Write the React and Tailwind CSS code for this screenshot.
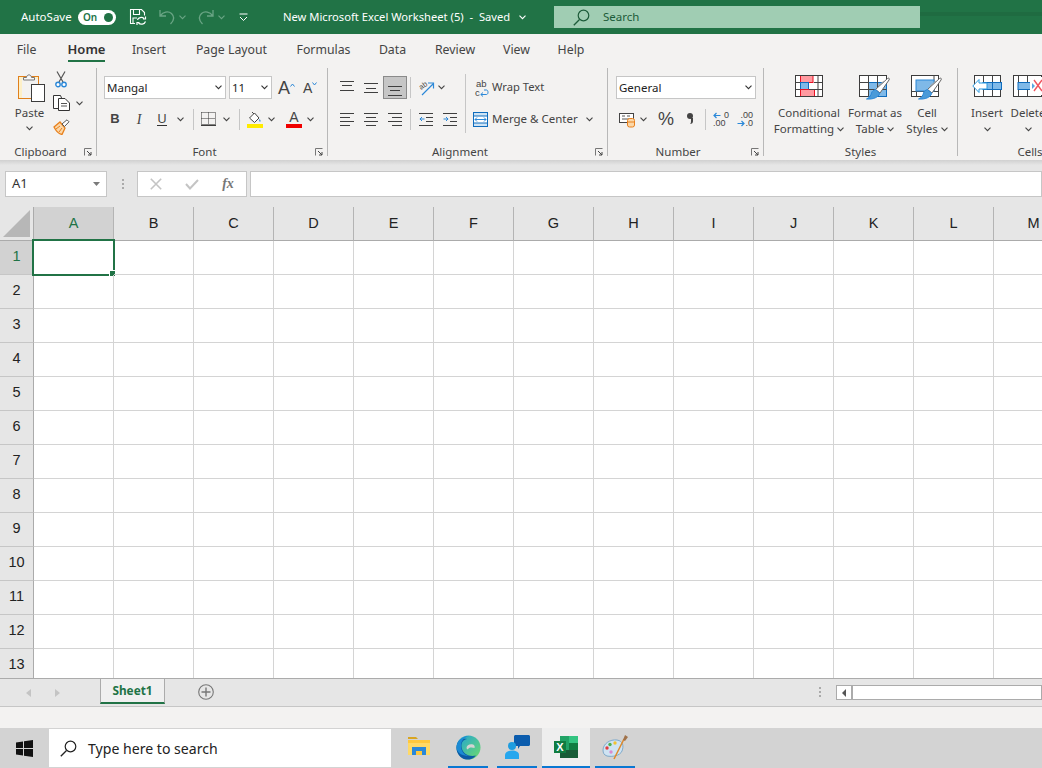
import React from "react";

const Chev = ({ c = "#444", className = "" }) => (
  <svg width="7" height="5" viewBox="0 0 7 5" className={"shrink-0 " + className}>
    <path d="M0.5 0.7L3.5 3.7L6.5 0.7" stroke={c} strokeWidth="1.1" fill="none" />
  </svg>
);

const Lines = ({ lines, w = 14, h = 18, children }) => (
  <svg width={w} height={h} viewBox={`0 0 ${w} ${h}`} className="shrink-0">
    {lines.map(([a, b, y], i) => (
      <rect key={i} x={a} y={y} width={b - a} height="1" fill="#3f3f3f" />
    ))}
    {children}
  </svg>
);

const Launcher = () => (
  <svg width="8" height="8" viewBox="0 0 8 8" className="shrink-0">
    <path d="M0.5 7.5V0.5H7.5" stroke="#777" fill="none" />
    <path d="M3 3L7 7M7 4V7H4" stroke="#444" fill="none" />
  </svg>
);

const PasteIcon = () => (
  <svg width="27" height="30" viewBox="0 0 27 30" className="block">
    <rect x="0.5" y="4.5" width="20" height="22" fill="#fdf0c8" stroke="#e0801c" />
    <rect x="4" y="7" width="16" height="19" fill="#f3f2f1" />
    <path d="M5.5 8V5.5H8.5C8.8 2 13.2 2 13.5 5.5H16.5V8Z" fill="#f7f7f7" stroke="#777" />
    <rect x="13.5" y="12.5" width="13" height="17" fill="#fff" stroke="#3c3c3c" />
  </svg>
);

const Scissors = () => (
  <svg width="12" height="17" viewBox="0 0 12 17" className="block">
    <path d="M2 0.5L8 11M10 0.5L4 11" stroke="#555" strokeWidth="1.2" fill="none" />
    <circle cx="3" cy="13.5" r="2.2" fill="#fff" stroke="#2b88d8" strokeWidth="1.4" />
    <circle cx="9" cy="13.5" r="2.2" fill="#fff" stroke="#2b88d8" strokeWidth="1.4" />
  </svg>
);

const CopyIcon = () => (
  <svg width="17" height="16" viewBox="0 0 17 16" className="block">
    <path d="M5.5 13.5H0.5V0.5H7.5L8.5 3" fill="#fff" stroke="#333" />
    <path d="M5.5 3.5H12L16.5 8V15.5H5.5Z" fill="#fff" stroke="#333" />
    <path d="M8 8.5H14M8 11H14" stroke="#555" />
  </svg>
);

const BrushIcon = () => (
  <svg width="17" height="16" viewBox="0 0 17 16" className="block">
    <path d="M1 8L7 3L12 9L9 15.5C6 15 3 12 1 8Z" fill="#fbd7a8" stroke="#e8801c" strokeWidth="1.3" />
    <path d="M3 10L7 7M6 13L9 9" stroke="#e8801c" />
    <path d="M9 5L14 0.8L16 2.8L11.5 7.5Z" fill="#fff" stroke="#555" />
  </svg>
);

const CondIcon = () => (
  <svg width="29" height="23" viewBox="0 0 29 23" className="block">
    <rect x="0.5" y="0.5" width="27" height="21" fill="#fff" />
    <rect x="5.5" y="0.5" width="12.5" height="7" fill="#ff9aa0" stroke="#e81123" />
    <rect x="5.5" y="7.5" width="8" height="7" fill="#7fb9e8" stroke="#0f6cbd" />
    <rect x="5.5" y="14.5" width="14" height="7" fill="#ff9aa0" stroke="#e81123" />
    <path d="M0.5 7.5H5M0.5 14.5H5M19 7.5H27.5M14 14.5H27.5M23 0.5V21.5" stroke="#444" fill="none" />
    <rect x="0.5" y="0.5" width="27" height="21" fill="none" stroke="#3c3c3c" />
  </svg>
);

const Brush = () => (
  <g>
    <path d="M28.5 3.5C29.8 2.5 31 3.7 30 5L21 18L16.5 14.5Z" fill="#fff" stroke="#666" />
    <path d="M19 11L25 6" stroke="#aaa" />
    <path d="M16.5 14.5L20.8 18.3C19.5 22.5 14 24.5 7.5 24C11 22.5 12 20 12.5 18C13 16 14.8 15 16.5 14.5Z" fill="#4a9ad8" stroke="#2b88d8" />
  </g>
);

const TableIcon = () => (
  <svg width="32" height="25" viewBox="0 0 32 25" className="block">
    <rect x="0.5" y="0.5" width="27" height="21" fill="#fff" stroke="#3c3c3c" />
    <rect x="9.5" y="7.5" width="18" height="14" fill="#7fb9e8" stroke="#0f6cbd" />
    <path d="M0.5 7.5H9.5M0.5 14.5H27.5M9.5 0.5V21.5M18.5 0.5V21.5" stroke="#444" fill="none" />
    <Brush />
  </svg>
);

const CellIcon = () => (
  <svg width="32" height="25" viewBox="0 0 32 25" className="block">
    <rect x="0.5" y="0.5" width="27" height="21" fill="#fff" stroke="#3c3c3c" />
    <path d="M0.5 16.5H27.5M5.5 16.5V21.5M18.5 16.5V21.5M23 0.5V16" stroke="#444" fill="none" />
    <rect x="5" y="5" width="18" height="11" fill="#7fb9e8" stroke="#2b88d8" />
    <Brush />
  </svg>
);

const InsertIcon = () => (
  <svg width="30" height="23" viewBox="0 0 30 23" className="block">
    <rect x="2.5" y="0.5" width="26" height="21" fill="#fff" stroke="#3c3c3c" />
    <path d="M11.5 0.5V21.5M20.5 0.5V21.5" stroke="#444" />
    <rect x="11" y="7.5" width="18.5" height="7" fill="#7fb9e8" stroke="#0f6cbd" />
    <path d="M20.5 7.5V14.5" stroke="#0f6cbd" />
    <path d="M0.8 11L7 4.5V8H15V14H7V17.5Z" fill="#fff" stroke="#2b9ae0" />
  </svg>
);

const DeleteIcon = () => (
  <svg width="30" height="23" viewBox="0 0 30 23" className="block">
    <rect x="0.5" y="0.5" width="28" height="21" fill="#fff" stroke="#3c3c3c" />
    <path d="M5.5 0.5V21.5M14.5 0.5V21.5" stroke="#444" />
    <rect x="5" y="7.5" width="14" height="7" fill="#7fb9e8" stroke="#0f6cbd" />
    <rect x="17" y="2" width="13" height="18" fill="#fff" />
    <path d="M19 8L22 11L19 14Z" fill="#5aa6e0" />
    <path d="M21 5L29 16M29 5L21 16" stroke="#f0555f" strokeWidth="1.4" />
  </svg>
);

const SaveIcon = () => (
  <svg width="18" height="18" viewBox="0 0 18 18" className="block">
    <path d="M6 15.5H1.5V1.5H12.5L15.5 4.5V7.5" stroke="#fff" fill="none" strokeWidth="1.1" />
    <path d="M4.5 1.5V6.5H10.5V1.5M4 15V10H8" stroke="#fff" fill="none" strokeWidth="1.1" />
    <path d="M8.5 12C9 9.5 13 8.5 15 10.5M16.5 8.5V11H14M16.5 13.5C15.5 16.5 11.5 17 9.5 15M8 17V14.5H10.5" stroke="#fff" fill="none" strokeWidth="1.2" />
  </svg>
);

const Undo = ({ flip }) => (
  <svg width="16" height="16" viewBox="0 0 16 16" className={"block " + (flip ? "-scale-x-100" : "")}>
    <path d="M1 1V7H7M1.5 6.5C4 3 9 1.5 12.5 4.5C15.5 7.5 15 11.5 11.5 15" stroke="#6aa585" fill="none" strokeWidth="1.3" />
  </svg>
);

const Magnifier = ({ c, size = 17 }) => (
  <svg width={size} height={size} viewBox="0 0 17 17" className="block">
    <circle cx="10.5" cy="6.5" r="5.3" stroke={c} strokeWidth="1.2" fill="none" />
    <path d="M6.5 10.5L0.8 16.2" stroke={c} strokeWidth="1.3" />
  </svg>
);

const tabs = [
  ["File", "w-[53px]"],
  ["Home", "w-[67px]"],
  ["Insert", "w-[58px]"],
  ["Page Layout", "w-[107px]"],
  ["Formulas", "w-[77px]"],
  ["Data", "w-[61px]"],
  ["Review", "w-[64px]"],
  ["View", "w-[59px]"],
  ["Help", "w-[50px]"],
];

const Label = ({ text, launcher }) => (
  <div className="mt-auto -mb-[3px] flex h-[14px] items-center text-[#444]">
    <span className="flex-1 text-center leading-[14px]">{text}</span>
    {launcher && (
      <span className="flex w-[15px] justify-start pl-[3px]">
        <Launcher />
      </span>
    )}
  </div>
);

const Sep = ({ className = "" }) => <div className={"h-[21px] w-px shrink-0 bg-[#c6c6c6] " + className} />;

const Box = ({ children, className = "" }) => (
  <div className={"flex h-[23px] shrink-0 items-center justify-center " + className}>{children}</div>
);

const Select = ({ text, className = "" }) => (
  <div className={"flex h-[23px] shrink-0 items-center justify-between border border-[#c6c6c6] bg-white pl-[2px] pr-[3px] text-[#222] " + className}>
    <span>{text}</span>
    <Chev c="#333" />
  </div>
);

const BigBtn = ({ icon, l1, l2, chev2, width }) => (
  <div className={"flex flex-col items-center pt-[7px] whitespace-nowrap text-[#444] " + width}>
    <div className="flex h-[23px] w-full justify-center">{icon}</div>
    <div className="mt-[7px] leading-[16px]">{l1}</div>
    <div className="flex h-[16px] items-center gap-[3px] leading-[16px]">
      {l2 && <span>{l2}</span>}
      {chev2 && <Chev />}
    </div>
  </div>
);

const cols = ["A", "B", "C", "D", "E", "F", "G", "H", "I", "J", "K", "L", "M"];
const rows = [1, 2, 3, 4, 5, 6, 7, 8, 9, 10, 11, 12, 13];

function Grid() {
  return (
    <div className="min-h-0 flex-1 overflow-hidden bg-white">
      <div className="grid w-max grid-cols-[34px_repeat(13,80px)] auto-rows-[34px] font-['Liberation_Sans',sans-serif] text-[14.5px] text-[#222]">
        <div className="flex items-end justify-end border-r border-b border-[#ababab] bg-[#e6e6e6] pr-[3px] pb-[3px]">
          <svg width="27" height="27" viewBox="0 0 27 27" className="block">
            <path d="M27 0V27H0Z" fill="#b7b7b7" />
          </svg>
        </div>
        {cols.map((c, i) => (
          <div
            key={c}
            className={
              "flex items-center justify-center border-r border-b border-r-[#b4b4b4] border-b-[#ababab] " +
              (i === 0 ? "bg-[#d2d2d2] text-[#217346]" : "bg-[#e6e6e6]")
            }
          >
            {c}
          </div>
        ))}
        {rows.map((r) => (
          <React.Fragment key={r}>
            <div
              className={
                "flex items-center justify-center border-r border-b border-r-[#ababab] border-b-[#c6c6c6] pb-[2px] " +
                (r === 1 ? "bg-[#d2d2d2] text-[#217346]" : "bg-[#e6e6e6]")
              }
            >
              {r}
            </div>
            {cols.map((c, i) => (
              <div key={c} className="relative border-r border-b border-[#d4d4d4]">
                {r === 1 && i === 0 && (
                  <>
                    <div className="absolute -top-[2px] -left-[2px] h-[37px] w-[83px] border-2 border-[#217346]" />
                    <div className="absolute -right-[3px] -bottom-[3px] h-[7px] w-[7px] border border-white bg-[#217346]" />
                  </>
                )}
              </div>
            ))}
          </React.Fragment>
        ))}
      </div>
    </div>
  );
}

function TitleBar() {
  return (
    <div className="flex h-[34px] shrink-0 items-center whitespace-nowrap bg-[#217346] pl-[21px] text-white">
      <span className="w-[50px]">AutoSave</span>
      <div className="ml-[7px] flex h-[15px] w-[38px] items-center justify-between rounded-full bg-white pl-[5px] pr-[3px] text-[#217346]">
        <span className="text-[10px] font-semibold leading-none">On</span>
        <span className="h-[9px] w-[9px] rounded-full bg-[#217346]" />
      </div>
      <div className="ml-[13px] w-[18px]">
        <SaveIcon />
      </div>
      <div className="ml-[12px]">
        <Undo />
      </div>
      <Chev c="#6aa585" className="ml-[4px]" />
      <div className="ml-[12px]">
        <Undo flip />
      </div>
      <Chev c="#6aa585" className="ml-[4px]" />
      <svg width="9" height="9" viewBox="0 0 9 9" className="ml-[14px] shrink-0">
        <path d="M0.5 1H8.5" stroke="#fff" />
        <path d="M1 4L4.5 7.5L8 4" stroke="#fff" fill="none" />
      </svg>
      <span className="ml-[35px] w-[231px] text-[11.2px]">New Microsoft Excel Worksheet (5)&nbsp; -&nbsp; Saved</span>
      <Chev c="#fff" className="ml-[5px]" />
      <div className="ml-[28px] flex h-[22px] w-[366px] shrink-0 items-center bg-[#a0cdb3] pl-[19px] text-[#1d5c3a]">
        <Magnifier c="#1d5c3a" />
        <span className="ml-[13px]">Search</span>
      </div>
      <div className="flex h-full flex-1 items-start overflow-hidden pt-[12px]">
        <div className="h-[4px] w-full bg-[#1f6b41]" />
      </div>
    </div>
  );
}

function Tabs() {
  return (
    <div className="flex h-[30px] shrink-0 bg-[#f3f2f1] text-[12.3px] text-[#444]">
      {tabs.map(([t, w]) => (
        <div key={t} className={"flex justify-center pt-[6px] " + w}>
          {t === "Home" ? (
            <span className="h-[22px] border-b-[2px] border-[#217346] text-[13px] font-semibold leading-[18px] text-[#333]">{t}</span>
          ) : (
            <span className="mt-[1px] leading-[18px]">{t}</span>
          )}
        </div>
      ))}
    </div>
  );
}

function Clipboard() {
  return (
    <div className="flex h-[88px] w-[97px] shrink-0 flex-col border-r border-[#b8b8b8]">
      <div className="flex">
        <div className="ml-[10px] flex w-[39px] flex-col pt-[4px] text-[#444]">
          <div className="h-[30px] pl-[8px]">
            <PasteIcon />
          </div>
          <div className="mt-[3px] text-center leading-[16px]">Paste</div>
          <div className="mt-[5px] flex justify-center">
            <Chev />
          </div>
        </div>
        <div className="ml-[4px] flex flex-col pt-[3px]">
          <div className="h-[17px] pl-[2px]">
            <Scissors />
          </div>
          <div className="mt-[7px] flex h-[16px] items-center">
            <CopyIcon />
            <Chev className="ml-[6px]" />
          </div>
          <div className="mt-[8px]">
            <BrushIcon />
          </div>
        </div>
      </div>
      <Label text="Clipboard" launcher />
    </div>
  );
}

const GrowA = ({ up }) => (
  <div className="flex w-[15px] shrink-0 items-end justify-start">
    <span className={"font-['Liberation_Sans',sans-serif] text-[#444] " + (up ? "text-[18px] leading-[20px]" : "text-[14px] leading-[18px]")}>A</span>
    <svg width="5" height="4" viewBox="0 0 5 4" className="mb-[11px] shrink-0">
      <path d={up ? "M0.5 3.5L2.5 1L4.5 3.5" : "M0.5 0.5L2.5 3L4.5 0.5"} stroke="#2b88d8" fill="none" />
    </svg>
  </div>
);

function FontGroup() {
  return (
    <div className="flex h-[88px] w-[231px] shrink-0 flex-col border-r border-[#b8b8b8] pt-[8px]">
      <div className="flex items-center pl-[7px]">
        <Select text="Mangal" className="w-[122px]" />
        <Select text="11" className="ml-[3px] w-[43px]" />
        <div className="ml-[6px]">
          <GrowA up />
        </div>
        <div className="ml-[10px]">
          <GrowA />
        </div>
      </div>
      <div className="mt-[8px] flex h-[24px] items-center pl-[7px] text-[#444]">
        <Box className="w-[22px] font-['Liberation_Sans',sans-serif] text-[13px] font-bold">B</Box>
        <Box className="ml-[2px] w-[22px] font-['Liberation_Serif',serif] text-[14px] italic">I</Box>
        <Box className="ml-[1px] w-[22px] text-[13px]">
          <span className="border-b border-[#333] leading-[13px]">U</span>
        </Box>
        <Chev className="ml-[4px]" />
        <Sep className="ml-[9px]" />
        <svg width="15" height="14" viewBox="0 0 15 14" className="ml-[7px] shrink-0">
          <path d="M0.5 0.5H14.5M0.5 0.5V12.5M14.5 0.5V12.5M7.5 0.5V12.5M0.5 6.5H14.5" stroke="#333" strokeDasharray="1 1" fill="none" />
          <rect x="0" y="12.5" width="15" height="1.3" fill="#111" />
        </svg>
        <Chev className="ml-[7px]" />
        <Sep className="ml-[9px]" />
        <svg width="16" height="17" viewBox="0 0 16 17" className="ml-[7px] shrink-0">
          <path d="M2.5 7L7.5 2L12 7L7.5 11.5Z" fill="#fff" stroke="#444" />
          <path d="M5 1L7 3" stroke="#444" />
          <path d="M12.5 8C13.5 9 14 10 13 11C12 10 12 9 12.5 8Z" fill="#2b88d8" />
          <rect x="0" y="13" width="16" height="4" fill="#ffeb00" />
        </svg>
        <Chev className="ml-[5px]" />
        <div className="ml-[11px] flex w-[16px] shrink-0 flex-col items-center">
          <span className="font-['Liberation_Sans',sans-serif] text-[14px] leading-[14px]">A</span>
          <div className="h-[4px] w-[16px] bg-[#f00000]" />
        </div>
        <Chev className="ml-[5px]" />
      </div>
      <Label text="Font" launcher />
    </div>
  );
}

function Alignment() {
  return (
    <div className="flex h-[88px] w-[280px] shrink-0 flex-col border-r border-[#b8b8b8] pt-[8px]">
      <div className="flex pl-[7px]">
        <div className="flex w-[130px] shrink-0 flex-col">
          <div className="flex h-[23px] items-center">
            <Box className="w-[24px]">
              <Lines lines={[[0, 14, 2], [2, 12, 6], [0, 14, 11]]} />
            </Box>
            <Box className="w-[24px]">
              <Lines lines={[[0, 14, 4], [2, 12, 9], [0, 14, 13]]} />
            </Box>
            <Box className="w-[24px] border border-[#8a8a8a] bg-[#c6c6c6]">
              <Lines lines={[[0, 14, 7], [2, 12, 11], [0, 14, 16]]} />
            </Box>
            <Sep className="ml-[3px]" />
            <div className="ml-[7px] flex items-center">
              <svg width="17" height="18" viewBox="0 0 17 18" className="shrink-0">
                <text x="3" y="11" fontSize="7.5" fill="#444" fontFamily="Liberation Sans" transform="rotate(-35 3 11)">ab</text>
                <path d="M4 16L15 5M10 4H15.5V9.5" stroke="#2b88d8" strokeWidth="1.2" fill="none" />
              </svg>
              <Chev className="ml-[3px]" />
            </div>
          </div>
          <div className="mt-[8px] flex h-[24px] items-center">
            <Box className="w-[24px]">
              <Lines lines={[[0, 14, 3], [0, 10, 7], [0, 14, 11], [0, 10, 15]]} />
            </Box>
            <Box className="w-[24px]">
              <Lines lines={[[0, 14, 3], [2, 12, 7], [0, 14, 11], [2, 12, 15]]} />
            </Box>
            <Box className="w-[24px]">
              <Lines lines={[[0, 14, 3], [4, 14, 7], [0, 14, 11], [4, 14, 15]]} />
            </Box>
            <Sep className="ml-[3px]" />
            <Box className="ml-[3px] w-[24px]">
              <Lines lines={[[0, 14, 3], [7, 14, 7], [7, 14, 11], [0, 14, 15]]}>
                <path d="M5.5 9H0.8M3 7L1 9L3 11" stroke="#2b88d8" fill="none" />
              </Lines>
            </Box>
            <Box className="w-[24px]">
              <Lines lines={[[0, 14, 3], [7, 14, 7], [7, 14, 11], [0, 14, 15]]}>
                <path d="M0.5 9H5.2M3 7L5 9L3 11" stroke="#2b88d8" fill="none" />
              </Lines>
            </Box>
          </div>
        </div>
        <div className="-mt-[2px] h-[59px] w-px shrink-0 bg-[#c6c6c6]" />
        <div className="flex flex-col whitespace-nowrap text-[#444]">
          <div className="flex h-[23px] items-center pl-[9px]">
            <div className="flex h-[18px] w-[16px] shrink-0 flex-col font-['Liberation_Sans',sans-serif] text-[9.5px] leading-[9px]">
              <span className="h-[9px] pl-[1px]">ab</span>
              <div className="flex h-[9px] items-end">
                <span className="h-[9px]">c</span>
                <svg width="9" height="8" viewBox="0 0 9 8" className="shrink-0">
                  <path d="M0.8 5.5H6.5C8.5 5.5 8.5 1 6.5 1H4M3 3.5L0.8 5.5L3 7.5" stroke="#2b88d8" fill="none" />
                </svg>
              </div>
            </div>
            <span className="ml-[1px] text-[11.2px]">Wrap Text</span>
          </div>
          <div className="mt-[8px] flex h-[24px] items-center pl-[7px]">
            <svg width="15" height="15" viewBox="0 0 15 15" className="shrink-0">
              <rect x="0.5" y="0.5" width="14" height="14" fill="#cfe4f5" stroke="#0f6cbd" />
              <rect x="0.5" y="4" width="14" height="7" fill="#fff" stroke="#0f6cbd" />
              <path d="M2 7.5H13M4 5.5L2 7.5L4 9.5M11 5.5L13 7.5L11 9.5" stroke="#2b88d8" fill="none" />
            </svg>
            <span className="ml-[4px] w-[94px]">Merge &amp; Center</span>
            <Chev />
          </div>
        </div>
      </div>
      <Label text="Alignment" launcher />
    </div>
  );
}

function NumberGroup() {
  return (
    <div className="flex h-[88px] w-[156px] shrink-0 flex-col border-r border-[#b8b8b8] pt-[8px]">
      <div className="pl-[8px]">
        <Select text="General" className="w-[140px]" />
      </div>
      <div className="mt-[8px] flex h-[24px] items-center pl-[11px] text-[#444]">
        <svg width="17" height="17" viewBox="0 0 17 17" className="shrink-0">
          <rect x="0.5" y="2.5" width="14" height="9" fill="#fff" stroke="#444" />
          <path d="M3 5H6M8 5H11M3 8H11" stroke="#555" />
          <rect x="8.5" y="7.5" width="7" height="8.5" rx="2" fill="#fbd7a8" stroke="#e8801c" />
          <path d="M8.5 11H15.5" stroke="#e8801c" />
        </svg>
        <Chev className="ml-[4px]" />
        <Box className="ml-[7px] w-[24px] font-['Liberation_Sans',sans-serif] text-[18px]">%</Box>
        <Box className="w-[24px]">
          <div className="flex h-[12px] w-[6px] flex-col items-end">
            <span className="h-[6px] w-[6px] rounded-full bg-[#444]" />
            <span className="-mt-[1px] h-[6px] w-[3px] rounded-br-[4px] border-r-2 border-[#444]" />
          </div>
        </Box>
        <Sep className="ml-[3px]" />
        <div className="ml-[7px] flex w-[16px] shrink-0 flex-col font-['Liberation_Sans',sans-serif] text-[9px] leading-[8px]">
          <div className="flex h-[8px] items-center justify-between">
            <svg width="8" height="7" viewBox="0 0 8 7" className="shrink-0">
              <path d="M7.5 3.5H1M3.5 1L1 3.5L3.5 6" stroke="#2b88d8" fill="none" strokeWidth="1.2" />
            </svg>
            <span>0</span>
          </div>
          <div className="h-[8px]">.00</div>
        </div>
        <div className="ml-[8px] flex w-[16px] shrink-0 flex-col font-['Liberation_Sans',sans-serif] text-[9px] leading-[8px]">
          <div className="h-[8px] text-right">.00</div>
          <div className="flex h-[8px] items-center justify-between">
            <svg width="8" height="7" viewBox="0 0 8 7" className="shrink-0">
              <path d="M0.5 3.5H7M4.5 1L7 3.5L4.5 6" stroke="#2b88d8" fill="none" strokeWidth="1.2" />
            </svg>
            <span>.0</span>
          </div>
        </div>
      </div>
      <Label text="Number" launcher />
    </div>
  );
}

function Styles() {
  return (
    <div className="flex h-[88px] w-[194px] shrink-0 flex-col border-r border-[#b8b8b8]">
      <div className="ml-[9px] flex">
        <BigBtn width="w-[72px]" icon={<CondIcon />} l1="Conditional" l2="Formatting" chev2 />
        <BigBtn width="w-[60px]" icon={<TableIcon />} l1="Format as" l2="Table" chev2 />
        <BigBtn width="w-[44px]" icon={<CellIcon />} l1="Cell" l2="Styles" chev2 />
      </div>
      <Label text="Styles" />
    </div>
  );
}

function Cells() {
  return (
    <div className="flex h-[88px] w-[144px] shrink-0 flex-col">
      <div className="ml-[7px] flex">
        <BigBtn width="w-[44px]" icon={<InsertIcon />} l1="Insert" chev2 />
        <BigBtn width="w-[38px]" icon={<DeleteIcon />} l1="Delete" chev2 />
      </div>
      <Label text="Cells" />
    </div>
  );
}

function Ribbon() {
  return (
    <>
      <div className="flex h-[96px] shrink-0 items-start bg-[#f3f2f1] pt-[4px]">
        <Clipboard />
        <FontGroup />
        <Alignment />
        <NumberGroup />
        <Styles />
        <Cells />
      </div>
      <div className="h-[5px] shrink-0 bg-linear-to-b from-[#d0d0d0] to-[#e6e6e6]" />
    </>
  );
}

function FormulaBar() {
  return (
    <div className="flex h-[42px] shrink-0 items-start bg-[#e6e6e6] pt-[6px]">
      <div className="ml-[5px] flex h-[26px] w-[102px] shrink-0 items-center justify-between border border-[#c6c6c6] bg-white pl-[6px] pr-[6px] text-[13px] text-[#333]">
        <span>A1</span>
        <svg width="7" height="4" viewBox="0 0 7 4">
          <path d="M0 0H7L3.5 4Z" fill="#7a7a7a" />
        </svg>
      </div>
      <div className="ml-[13px] flex h-[26px] w-[5px] shrink-0 flex-col items-center justify-center gap-[2px]">
        <span className="h-[2px] w-[2px] bg-[#aaa]" />
        <span className="h-[2px] w-[2px] bg-[#aaa]" />
        <span className="h-[2px] w-[2px] bg-[#aaa]" />
      </div>
      <div className="ml-[12px] flex h-[26px] w-[110px] shrink-0 items-center border border-[#c6c6c6] bg-white">
        <div className="flex w-[36px] justify-center">
          <svg width="12" height="12" viewBox="0 0 12 12">
            <path d="M0.8 0.8L11.2 11.2M11.2 0.8L0.8 11.2" stroke="#c4c4c4" strokeWidth="1.6" />
          </svg>
        </div>
        <div className="flex w-[36px] justify-center">
          <svg width="14" height="11" viewBox="0 0 14 11">
            <path d="M1 5L5 9.5L13 1" stroke="#c4c4c4" strokeWidth="2" fill="none" />
          </svg>
        </div>
        <div className="flex w-[36px] justify-center font-['Liberation_Serif',serif] text-[14px] font-bold italic leading-none text-[#777]">fx</div>
      </div>
      <div className="ml-[3px] h-[26px] flex-1 border border-[#c6c6c6] bg-white" />
    </div>
  );
}

function SheetBar() {
  return (
    <div className="flex h-[29px] shrink-0 items-start border-y border-t-[#ababab] border-b-[#c6c6c6] bg-[#e6e6e6]">
      <div className="ml-[26px] mt-[10px] h-0 w-0 border-y-[4px] border-r-[5px] border-y-transparent border-r-[#c4c4c4]" />
      <div className="ml-[24px] mt-[10px] h-0 w-0 border-y-[4px] border-l-[5px] border-y-transparent border-l-[#c4c4c4]" />
      <div className="ml-[40px] flex h-[25px] w-[65px] shrink-0 items-center justify-center border-x border-b-2 border-x-[#ababab] border-b-[#217346] bg-[#f0f0f0] text-[11.8px] font-bold text-[#217346]">
        Sheet1
      </div>
      <div className="ml-[33px] mt-[5px]">
        <svg width="16" height="16" viewBox="0 0 16 16" className="block">
          <circle cx="8" cy="8" r="7.3" stroke="#777" strokeWidth="1.1" fill="none" />
          <path d="M8 3.5V12.5M3.5 8H12.5" stroke="#777" strokeWidth="1.4" />
        </svg>
      </div>
      <div className="ml-[605px] mt-[8px] flex w-[3px] shrink-0 flex-col gap-[2px]">
        <span className="h-[2px] w-[2px] bg-[#aaa]" />
        <span className="h-[2px] w-[2px] bg-[#aaa]" />
        <span className="h-[2px] w-[2px] bg-[#aaa]" />
      </div>
      <div className="ml-[14px] mt-[6px] flex h-[15px] flex-1 border border-[#ababab] bg-white">
        <div className="flex w-[16px] shrink-0 items-center justify-center border-r-2 border-[#ababab]">
          <div className="h-0 w-0 border-y-[4px] border-r-[4px] border-y-transparent border-r-[#555]" />
        </div>
      </div>
    </div>
  );
}

const Explorer = () => (
  <svg width="24" height="22" viewBox="0 0 24 22">
    <path d="M1 3V1H9L11 3Z" fill="#d9a520" />
    <path d="M1 4H23V19H1Z" fill="#ffd966" />
    <path d="M1 4H23V7H1Z" fill="#ffc83d" />
    <path d="M5 19V11H19V19H15V15H9V19Z" fill="#2b88d8" />
    <rect x="9" y="15" width="6" height="4" fill="#ffc83d" />
  </svg>
);

const Edge = () => (
  <svg width="25" height="25" viewBox="0 0 25 25">
    <defs>
      <linearGradient id="eg1" x1="0" y1="0" x2="1" y2="1">
        <stop offset="0" stopColor="#1fa2d8" />
        <stop offset="1" stopColor="#6fdc6a" />
      </linearGradient>
    </defs>
    <circle cx="12.5" cy="12.5" r="12" fill="url(#eg1)" />
    <path d="M0.5 13C0.5 5 7 3 11 4C6 5 4.5 9 6 14C7.5 19 13 22 20 20.5C17 24 13 25 10 24.5C4 23.5 0.5 18 0.5 13Z" fill="#0c59a4" />
    <path d="M0.6 12C1 5 7 1 13 1C9 2 5 5 5 11C5 16 8 20 13 21C8 21 0.5 19 0.6 12Z" fill="#1b8ad4" />
    <path d="M10.5 13C10.5 10 14 8.5 17 9.5C18.5 10 19 11.5 18.5 13C16 12 13 12 11.5 14.5C11 14 10.5 13.5 10.5 13Z" fill="#d3d3d3" />
  </svg>
);

const People = () => (
  <svg width="25" height="24" viewBox="0 0 25 24">
    <path d="M9 1.5C9 0.7 9.7 0 10.5 0H23.5C24.3 0 25 0.7 25 1.5V9.5C25 10.3 24.3 11 23.5 11H15L13 14V11H10.5C9.7 11 9 10.3 9 9.5Z" fill="#0b5cad" />
    <circle cx="7" cy="11" r="4" fill="#1e9de0" />
    <path d="M0 24V20C0 17 3 15.5 7 15.5C11 15.5 14 17 14 20V24Z" fill="#27a7ee" />
  </svg>
);

const ExcelLogo = () => (
  <svg width="24" height="22" viewBox="0 0 24 22">
    <rect x="6" y="0" width="18" height="22" fill="#21a366" />
    <rect x="15" y="0" width="9" height="7" fill="#33c481" />
    <rect x="6" y="14" width="18" height="8" fill="#185c37" />
    <rect x="15" y="7" width="9" height="7" fill="#107c41" />
    <rect x="0" y="5" width="12" height="12" fill="#107c41" />
    <text x="6" y="15" textAnchor="middle" fontSize="11" fontWeight="700" fill="#fff" fontFamily="Liberation Sans">X</text>
  </svg>
);

const Palette = () => (
  <svg width="26" height="25" viewBox="0 0 26 25">
    <path d="M1 15C1 9 8 4 15 5C21 6 22 11 20 16C18 21 10 22 5 21C2 20 1 18 1 15Z" fill="#cfe3f2" stroke="#7fa9c9" />
    <circle cx="5" cy="13" r="1.7" fill="#e23b3b" />
    <circle cx="8" cy="9.5" r="1.7" fill="#4caf50" />
    <circle cx="13" cy="8" r="1.7" fill="#f2c230" />
    <circle cx="9" cy="17" r="1.7" fill="#d98ad0" />
    <path d="M12 24L22 4" stroke="#e08a2c" strokeWidth="1.6" />
    <path d="M21 5L23 0L26 2L23 6Z" fill="#a0724a" />
  </svg>
);

const apps = [
  [<Explorer key="a" />, null],
  [<Edge key="b" />, "w-[40px]"],
  [<People key="c" />, "w-[40px]"],
  [<ExcelLogo key="d" />, "w-[48px]", true],
  [<Palette key="e" />, "w-[40px]"],
];

function Taskbar() {
  return (
    <div className="flex h-[40px] shrink-0 items-stretch bg-[#d3d3d3]">
      <div className="flex w-[49px] shrink-0 items-center justify-center">
        <svg width="17" height="17" viewBox="0 0 17 17">
          <path d="M0 2.4L7 1.4V8H0ZM8 1.2L17 0V8H8ZM0 9H7V15.6L0 14.6ZM8 9H17V17L8 15.8Z" fill="#111" />
        </svg>
      </div>
      <div className="mt-[1px] mb-px flex w-[342px] shrink-0 items-center bg-white pl-[11px] text-[14.1px] text-[#222]">
        <Magnifier c="#222" />
        <span className="ml-[11px] mt-[1px]">Type here to search</span>
      </div>
      <div className="ml-[4px] flex gap-px">
        {apps.map(([icon, bar, active], i) => (
          <div key={i} className={"flex w-[48px] flex-col items-center " + (active ? "bg-[#eeeeee]" : "")}>
            <div className="flex flex-1 items-center justify-center">{icon}</div>
            <div className={"h-[2px] bg-[#0a78d2] " + (bar || "")} />
          </div>
        ))}
      </div>
    </div>
  );
}

export default function App() {
  return (
    <div className="flex h-[768px] w-[1042px] flex-col overflow-hidden bg-[#e6e6e6] font-['Noto_Sans',sans-serif] text-[11.5px]">
      <TitleBar />
      <Tabs />
      <Ribbon />
      <FormulaBar />
      <Grid />
      <SheetBar />
      <div className="h-[21px] shrink-0 bg-[#f3f2f1]" />
      <Taskbar />
    </div>
  );
}
